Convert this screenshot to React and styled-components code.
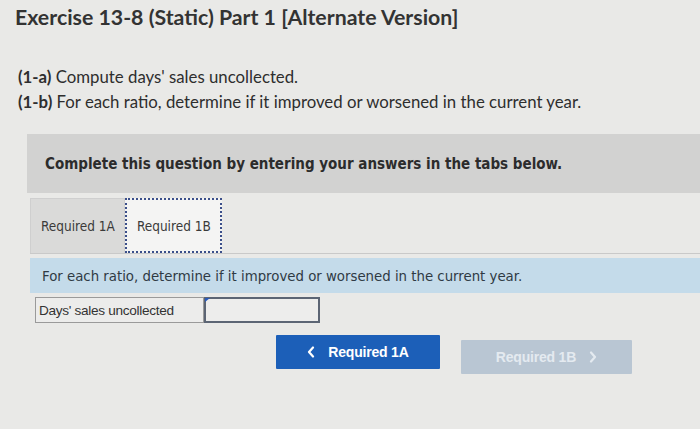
import styled, { createGlobalStyle } from "styled-components";

const GlobalStyle = createGlobalStyle`
  html, body {
    margin: 0;
    padding: 0;
    background: #e9e9e7;
  }
  body {
    width: 700px;
    height: 429px;
    overflow: hidden;
    font-family: "Lato", "Open Sans", sans-serif;
  }
`;

const Page = styled.div`
  padding: 4px 0 0 15px;
  color: #2b2b2b;
`;

const Title = styled.h1`
  margin: 0;
  font-size: 21.3px;
  font-weight: 700;
  color: #333;
  line-height: 26px;
`;

const Parts = styled.div`
  margin-top: 34px;
  padding-left: 3px;
  font-size: 16.8px;
  line-height: 25px;
  color: #2e2e2e;
`;

const Part = styled.div`
  b {
    font-weight: 700;
  }
`;

const Question = styled.div`
  margin-top: 20px;
  margin-left: 12px;
  font-family: "DejaVu Sans Condensed", "DejaVu Sans", sans-serif;
`;

const Banner = styled.div`
  height: 59px;
  background: #d2d2d1;
  display: flex;
  align-items: center;
  padding-left: 18px;
  font-size: 15px;
  font-weight: 700;
  color: #2c2c2c;
`;

const TabBar = styled.div`
  display: flex;
  margin-top: 5px;
  margin-left: 3px;
  height: 55px;
  border-bottom: 1px solid #c9c9c9;
`;

const Tab = styled.div`
  display: flex;
  align-items: center;
  padding: 0 9px 0 ${(p) => (p.$active ? "10px" : "10px")};
  font-size: 13.5px;
  color: #3a3a3a;
  background: ${(p) => (p.$active ? "#f4f4f3" : "#dadad9")};
  border: ${(p) => (p.$active ? "2px dotted #3b4f8a" : "1px solid #cfcfcf")};
  border-bottom: ${(p) => (p.$active ? "2px dotted #3b4f8a" : "none")};
`;

const Prompt = styled.div`
  margin-top: 4px;
  margin-left: 3px;
  height: 35px;
  background: #c4dbea;
  display: flex;
  align-items: center;
  padding-left: 12px;
  font-size: 14.8px;
  color: #2f3a44;
`;

const AnswerRow = styled.div`
  display: flex;
  margin-top: 4px;
  margin-left: 8px;
  font-family: "Liberation Sans", Arial, sans-serif;
`;

const Label = styled.div`
  width: 164px;
  height: 24px;
  border: 1px solid #9a9a9a;
  background: #ececeb;
  display: flex;
  align-items: center;
  padding-left: 3px;
  font-size: 13.6px;
  color: #333;
  letter-spacing: -0.3px;
`;

const InputCell = styled.div`
  position: relative;
  width: 112px;
  height: 22px;
  border: 2px solid #5c6574;
  background: #ededec;
  &::before {
    content: "";
    position: absolute;
    left: -1px;
    top: -1px;
    border-left: 5px solid #2b5bb8;
    border-bottom: 4px solid transparent;
  }
`;

const Nav = styled.div`
  display: flex;
  align-items: flex-start;
  margin-top: 12px;
  margin-left: 249px;
  gap: 21px;
  font-family: "Liberation Sans", Arial, sans-serif;
`;

const NavButton = styled.div`
  display: flex;
  align-items: center;
  justify-content: center;
  gap: 13px;
  width: ${(p) => (p.$disabled ? "171px" : "164px")};
  height: 34px;
  margin-top: ${(p) => (p.$disabled ? "5px" : "0")};
  background: ${(p) => (p.$disabled ? "#b9c6d3" : "#1c5fb8")};
  color: ${(p) => (p.$disabled ? "#e4eaf0" : "#ffffff")};
  font-size: 14px;
  font-weight: 700;
  letter-spacing: -0.2px;
  border-radius: 1px;
`;

const Chevron = ({ dir }) => (
  <svg width="8" height="12" viewBox="0 0 8 12">
    <path
      d={dir === "left" ? "M6 1.5 L2 6 L6 10.5" : "M2 1.5 L6 6 L2 10.5"}
      fill="none"
      stroke="currentColor"
      strokeWidth="2.2"
      strokeLinecap="round"
      strokeLinejoin="round"
    />
  </svg>
);

export default function App() {
  return (
    <>
      <GlobalStyle />
      <Page>
        <Title>Exercise 13-8 (Static) Part 1 [Alternate Version]</Title>
        <Parts>
          <Part>
            <b>(1-a)</b> Compute days' sales uncollected.
          </Part>
          <Part>
            <b>(1-b)</b> For each ratio, determine if it improved or worsened in the current year.
          </Part>
        </Parts>
        <Question>
          <Banner>Complete this question by entering your answers in the tabs below.</Banner>
          <TabBar>
            <Tab>Required 1A</Tab>
            <Tab $active>Required 1B</Tab>
          </TabBar>
          <Prompt>For each ratio, determine if it improved or worsened in the current year.</Prompt>
          <AnswerRow>
            <Label>Days' sales uncollected</Label>
            <InputCell />
          </AnswerRow>
          <Nav>
            <NavButton>
              <Chevron dir="left" />
              Required 1A
            </NavButton>
            <NavButton $disabled>
              Required 1B
              <Chevron dir="right" />
            </NavButton>
          </Nav>
        </Question>
      </Page>
    </>
  );
}
